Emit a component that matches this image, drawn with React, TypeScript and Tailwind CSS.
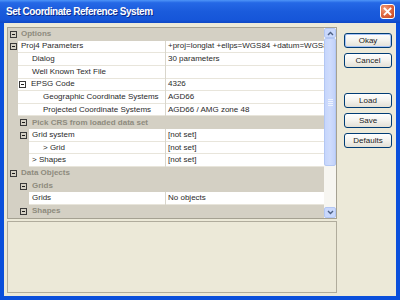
import React from "react";

const GRAY = "bg-[#D4D0C4]";

function Box() {
  return (
    <div className="w-[7px] h-[7px] border border-[#3a3a3a] shrink-0 flex items-center justify-center">
      <div className="w-[3px] h-px bg-[#1a1a1a]" />
    </div>
  );
}

function Cat({ pad, gap, text }: { pad: string; gap: string; text: string }) {
  return (
    <div className={`flex items-center h-[12.65px] ${GRAY} ${pad}`}>
      <Box />
      <span className={`${gap} text-[8px] font-bold text-[#8E8B7E] leading-none whitespace-nowrap`}>{text}</span>
    </div>
  );
}

function Prop({
  margin,
  mbox,
  nbox,
  namePad,
  name,
  value,
}: {
  margin: string;
  mbox?: boolean;
  nbox?: boolean;
  namePad: string;
  name: string;
  value: string;
}) {
  return (
    <div className="flex h-[12.65px] text-[8px] leading-none text-[#2a2a2a]">
      <div className="flex w-[157px] shrink-0">
        <div className={`${margin} ${GRAY} flex items-center shrink-0`}>{mbox && <Box />}</div>
        <div className={`flex-1 bg-white border-b border-[#E8E5DB] flex items-center whitespace-nowrap ${namePad}`}>
          {nbox && <Box />}
          <span className={nbox ? "ml-[5px]" : ""}>{name}</span>
        </div>
      </div>
      <div className="w-px bg-[#D9D6CC] shrink-0" />
      <div className="flex-1 min-w-0 bg-white border-b border-[#E8E5DB] flex items-center pl-[2px] overflow-hidden whitespace-nowrap">
        {value}
      </div>
    </div>
  );
}

function Btn({ label, def }: { label: string; def?: boolean }) {
  return (
    <div
      className={`w-[48px] h-[15px] rounded-[3px] border border-[#003C74] bg-[linear-gradient(to_bottom,#FFFFFF_0%,#F4F3EE_50%,#E3E0D6_100%)] flex items-center justify-center text-[8px] leading-none text-[#222] ${
        def ? "shadow-[inset_0_0_0_1px_#A9C4F5]" : ""
      }`}
    >
      {label}
    </div>
  );
}

export default function App() {
  return (
    <div className="w-[400px] h-[300px] flex flex-col font-['Liberation_Sans',Arial,sans-serif] bg-[#0A4FDB] overflow-hidden">
      {/* title bar */}
      <div className="h-[23px] shrink-0 flex items-center justify-between pl-[6px] pr-[5px] bg-[linear-gradient(to_bottom,#4E95F8_0%,#2568E6_12%,#1A5BDC_50%,#1656D9_85%,#0F47C4_100%)]">
        <span className="text-white font-bold text-[10px] tracking-[-0.45px] leading-none [text-shadow:1px_1px_0_#0C2A8A]">
          Set Coordinate Reference System
        </span>
        <div className="w-[15px] h-[15px] rounded-[3px] border border-white bg-[radial-gradient(circle_at_30%_30%,#F0A07E_0%,#E06A43_45%,#C3421C_100%)] flex items-center justify-center">
          <svg width="9" height="9" viewBox="0 0 9 9">
            <path d="M1.5 1.5 L7.5 7.5 M7.5 1.5 L1.5 7.5" stroke="white" strokeWidth="1.8" strokeLinecap="square" />
          </svg>
        </div>
      </div>

      {/* client */}
      <div className="flex-1 mx-[4px] mb-[4px] bg-[#ECE9D8] flex pl-[3px] pt-[4px] pb-[3px]">
        <div className="w-[330px] flex flex-col gap-[2px]">
          {/* grid */}
          <div className="h-[192px] border border-[#A5A192] bg-white flex">
            <div className="w-[316px] flex flex-col overflow-hidden">
              <Cat pad="pl-[2px]" gap="ml-[4px]" text="Options" />
              <Prop margin="w-[10px] pl-[2px]" mbox namePad="pl-[3px]" name="Proj4 Parameters" value="+proj=longlat +ellps=WGS84 +datum=WGS84 +no_defs" />
              <Prop margin="w-[10px]" namePad="pl-[14px]" name="Dialog" value="30 parameters" />
              <Prop margin="w-[10px]" namePad="pl-[14px]" name="Well Known Text File" value="" />
              <Prop margin="w-[10px]" nbox namePad="pl-[1px]" name="EPSG Code" value="4326" />
              <Prop margin="w-[10px]" namePad="pl-[25px]" name="Geographic Coordinate Systems" value="AGD66" />
              <Prop margin="w-[10px]" namePad="pl-[25px]" name="Projected Coordinate Systems" value="AGD66 / AMG zone 48" />
              <Cat pad="pl-[12px]" gap="ml-[5px]" text="Pick CRS from loaded data set" />
              <Prop margin="w-[21px] pl-[12px]" mbox namePad="pl-[3px]" name="Grid system" value="[not set]" />
              <Prop margin="w-[21px]" namePad="pl-[14px]" name="> Grid" value="[not set]" />
              <Prop margin="w-[21px]" namePad="pl-[3px]" name="> Shapes" value="[not set]" />
              <Cat pad="pl-[2px]" gap="ml-[4px]" text="Data Objects" />
              <Cat pad="pl-[12px]" gap="ml-[5px]" text="Grids" />
              <Prop margin="w-[21px]" namePad="pl-[3px]" name="Grids" value="No objects" />
              <Cat pad="pl-[12px]" gap="ml-[5px]" text="Shapes" />
            </div>
            {/* scrollbar */}
            <div className="w-[12px] flex flex-col bg-[#F7F6F1]">
              <div className="h-[10px] rounded-[2px] border border-[#B3C7F3] bg-[#C9D8FC] flex items-center justify-center">
                <svg width="7" height="5" viewBox="0 0 7 5">
                  <path d="M1 4 L3.5 1.5 L6 4" stroke="#4D6185" strokeWidth="1.4" fill="none" />
                </svg>
              </div>
              <div className="h-[128px] rounded-[2px] border border-[#B3C7F3] bg-[linear-gradient(to_right,#C6D6FC,#CFDCFC_50%,#C2D2FA)] flex flex-col items-center justify-center gap-[1px]">
                <div className="w-[5px] h-px bg-[#EEF3FE]" />
                <div className="w-[5px] h-px bg-[#EEF3FE]" />
                <div className="w-[5px] h-px bg-[#EEF3FE]" />
                <div className="w-[5px] h-px bg-[#EEF3FE]" />
              </div>
              <div className="flex-1" />
              <div className="h-[11px] rounded-[2px] border border-[#B3C7F3] bg-[#C9D8FC] flex items-center justify-center">
                <svg width="7" height="5" viewBox="0 0 7 5">
                  <path d="M1 1 L3.5 3.5 L6 1" stroke="#4D6185" strokeWidth="1.4" fill="none" />
                </svg>
              </div>
            </div>
          </div>
          {/* description */}
          <div className="flex-1 border border-[#B0AC9C] bg-[#ECE9D8]" />
        </div>

        {/* buttons */}
        <div className="ml-[7px] pt-[6px] flex flex-col">
          <Btn label="Okay" def />
          <div className="h-[5px]" />
          <Btn label="Cancel" />
          <div className="h-[25px]" />
          <Btn label="Load" />
          <div className="h-[5px]" />
          <Btn label="Save" />
          <div className="h-[5px]" />
          <Btn label="Defaults" />
        </div>
      </div>
    </div>
  );
}
